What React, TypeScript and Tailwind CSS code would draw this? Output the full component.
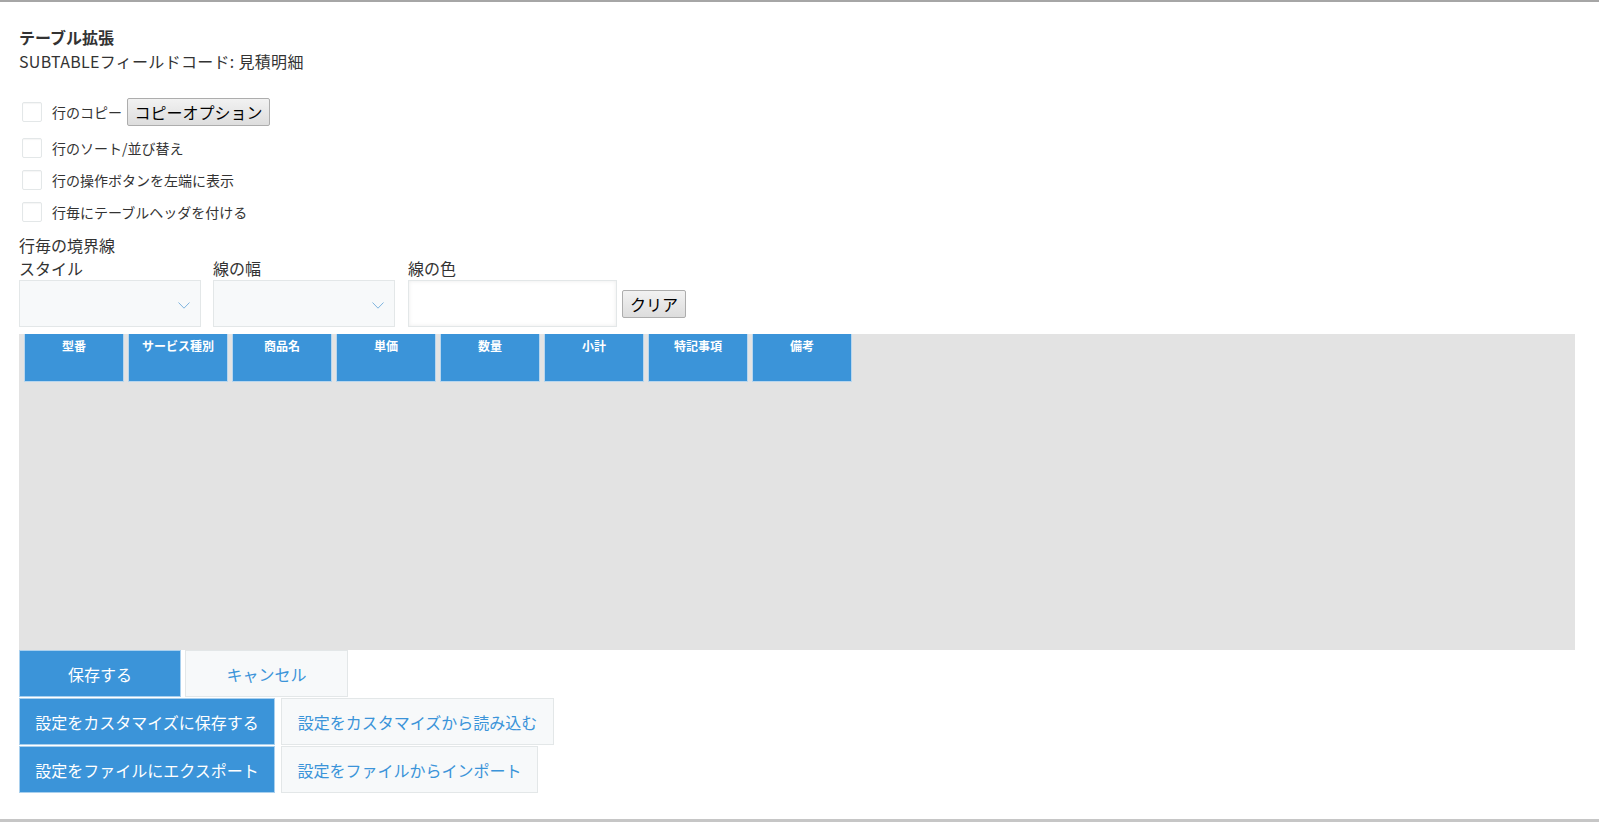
import React from "react";

const font = { fontFamily: '"Noto Sans CJK JP", "Noto Sans", sans-serif' };

function Checkbox() {
  return (
    <span className="inline-block w-[20px] h-[20px] bg-white border border-[#e3e7e8] rounded-[2px] shadow-[inset_0_1px_1px_rgba(0,0,0,0.04)] shrink-0" />
  );
}

function NativeButton({ children, className = "" }: { children: React.ReactNode; className?: string }) {
  return (
    <button
      className={
        "h-[28px] px-[4px] text-[16px] leading-none whitespace-nowrap text-black border border-[#adadad] rounded-[2px] bg-gradient-to-b from-[#f2f2f2] to-[#dddddd] flex items-center justify-center shrink-0 " +
        className
      }
    >
      {children}
    </button>
  );
}

function Chevron() {
  return (
    <svg width="12" height="7" viewBox="0 0 12 7" className="shrink-0">
      <polyline points="0.5,0.5 6,6.2 11.5,0.5" fill="none" stroke="#7fb4de" strokeWidth="1" />
    </svg>
  );
}

function Select() {
  return (
    <div className="w-[182px] h-[47px] bg-[#f7f9fa] border border-[#e3e7e8] flex items-center justify-end pr-[10px] pt-[4px]">
      <Chevron />
    </div>
  );
}

const headers = ["型番", "サービス種別", "商品名", "単価", "数量", "小計", "特記事項", "備考"];

function BlueBtn({ children, w }: { children: React.ReactNode; w: string }) {
  return (
    <button className={"h-[47px] bg-[#3b94d9] border border-[#a9d0ee] text-white text-[16px] whitespace-nowrap flex items-center justify-center shrink-0 " + w}>
      {children}
    </button>
  );
}

function WhiteBtn({ children, w }: { children: React.ReactNode; w: string }) {
  return (
    <button className={"h-[47px] bg-[#f7f9fa] border border-[#e3e7e8] text-[#3b94d9] text-[16px] whitespace-nowrap flex items-center justify-center shrink-0 " + w}>
      {children}
    </button>
  );
}

export default function App() {
  return (
    <div className="w-[1599px] h-[823px] bg-white flex flex-col text-[#333]" style={font}>
      <div className="h-[2px] bg-[#a6a6a6] shrink-0" />
      <div className="pl-[19px] pt-[24px] flex flex-col flex-1">
        <div className="text-[16px] font-bold leading-[22px] h-[22px]">テーブル拡張</div>
        <div className="text-[16px] leading-[22px] h-[22px] mt-[2px] whitespace-nowrap tracking-[0.3px]">SUBTABLEフィールドコード: 見積明細</div>

        <div className="mt-[24px] flex flex-col">
          <div className="h-[32px] flex items-center pl-[3px] mb-[4px]">
            <Checkbox />
            <span className="ml-[10px] text-[14px] whitespace-nowrap">行のコピー</span>
            <NativeButton className="ml-[5px] w-[143px]">コピーオプション</NativeButton>
          </div>
          <div className="h-[32px] flex items-center pl-[3px]">
            <Checkbox />
            <span className="ml-[10px] text-[14px] whitespace-nowrap">行のソート/並び替え</span>
          </div>
          <div className="h-[32px] flex items-center pl-[3px]">
            <Checkbox />
            <span className="ml-[10px] text-[14px] whitespace-nowrap">行の操作ボタンを左端に表示</span>
          </div>
          <div className="h-[32px] flex items-center pl-[3px]">
            <Checkbox />
            <span className="ml-[10px] text-[14px] whitespace-nowrap">行毎にテーブルヘッダを付ける</span>
          </div>
        </div>

        <div className="mt-[6px] text-[16px] leading-[22px] h-[22px]">行毎の境界線</div>
        <div className="flex items-end">
          <div className="flex flex-col w-[182px]">
            <div className="text-[16px] leading-[24px] h-[24px]">スタイル</div>
            <Select />
          </div>
          <div className="flex flex-col w-[182px] ml-[12px]">
            <div className="text-[16px] leading-[24px] h-[24px]">線の幅</div>
            <Select />
          </div>
          <div className="flex flex-col ml-[13px]">
            <div className="text-[16px] leading-[24px] h-[24px]">線の色</div>
            <div className="flex items-center">
              <div className="w-[209px] h-[47px] bg-white border border-[#e3e7e8] shadow-[inset_0_0_4px_rgba(0,0,0,0.08)]" />
              <NativeButton className="ml-[5px] w-[64px]">クリア</NativeButton>
            </div>
          </div>
        </div>

        <div className="mt-[7px] w-[1556px] h-[316px] bg-[#e3e3e3] pl-[5px] flex gap-[4px] items-start">
          {headers.map((h) => (
            <div
              key={h}
              className="w-[100px] h-[48px] bg-[#3b94d9] border border-[#b8d6ee] border-t-0 text-white text-[12px] font-bold text-center pt-[3px] leading-[18px] whitespace-nowrap"
            >
              {h}
            </div>
          ))}
        </div>

        <div className="flex flex-col gap-[1px]">
          <div className="flex gap-[4px]">
            <BlueBtn w="w-[162px]">保存する</BlueBtn>
            <WhiteBtn w="w-[163px]">キャンセル</WhiteBtn>
          </div>
          <div className="flex gap-[6px]">
            <BlueBtn w="w-[256px]">設定をカスタマイズに保存する</BlueBtn>
            <WhiteBtn w="w-[273px]">設定をカスタマイズから読み込む</WhiteBtn>
          </div>
          <div className="flex gap-[6px]">
            <BlueBtn w="w-[256px]">設定をファイルにエクスポート</BlueBtn>
            <WhiteBtn w="w-[257px]">設定をファイルからインポート</WhiteBtn>
          </div>
        </div>
        <div className="flex-1" />
      </div>
      <div className="h-[3px] bg-[#c6c6c6] shrink-0" />
      <div className="h-[1px] bg-white shrink-0" />
    </div>
  );
}
